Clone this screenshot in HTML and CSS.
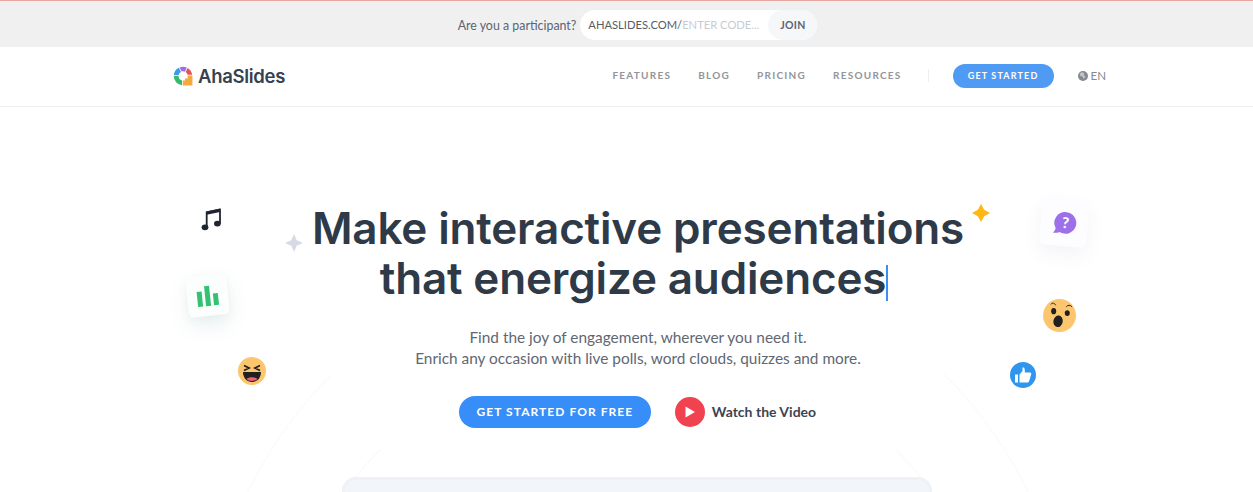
FILE: index.html
```html
<!DOCTYPE html>
<html lang="en">
<head>
    <meta charset="UTF-8">
    <meta name="viewport" content="width=device-width, initial-scale=1.0">
    <title>AhaSlides</title>
    <link rel="stylesheet" href="styles.css">
</head>
<body>
    <div class="join-bar">
        <span class="join-label">Are you a participant?</span>
        <form class="join-form">
            <span class="join-domain">AHASLIDES.COM/</span>
            <span class="join-code">ENTER CODE...</span>
            <span class="join-btn">JOIN</span>
        </form>
    </div>

    <header class="nav">
        <a class="logo">
            <svg class="logo-mark" viewBox="0 0 20 20" width="20" height="20">
                <path d="M.8 9.200A9.200 9.200 0 0 1 5.800 1.800L8 5.900A4.600 4.600 0 0 0 5.600 9.200Z" fill="#3f9be8"/>
                <path d="M6.500 1.500A9.200 9.200 0 0 1 13.800 1.600L12 5.800A4.600 4.600 0 0 0 8.700 5.600Z" fill="#9b70e6"/>
                <path d="M14.500 2A9.200 9.200 0 0 1 19.200 8.800H14.600A4.600 4.600 0 0 0 12.700 6.100Z" fill="#e8545a"/>
                <path d="M.8 10H5.600A4.600 4.600 0 0 0 9 14.500V19.200A9.200 9.200 0 0 1 .8 10Z" fill="#38b868"/>
                <path d="M14.600 9.600H19.400V19.400H9.800V14.500H12V12.500H14.600Z" fill="#f5a93a"/>
            </svg>
            <span class="logo-text">AhaSlides</span>
        </a>
        <nav class="nav-links">
            <a>FEATURES</a>
            <a>BLOG</a>
            <a>PRICING</a>
            <a>RESOURCES</a>
        </nav>
        <span class="nav-divider"></span>
        <a class="nav-cta">GET STARTED</a>
        <a class="lang">
            <svg viewBox="0 0 12 12" width="10" height="10">
                <circle cx="6" cy="6" r="6" fill="#86898d"/>
                <path d="M4 1.500 7.500 2.500 7 5 9 6.500 7 9.500 5.500 7 3 6 2 3.500Z" fill="#c3c5c8"/>
            </svg>
            EN
        </a>
    </header>

    <main class="hero">
        <div class="arc arc-outer"></div>
        <div class="arc arc-inner"></div>

        <!-- decoracao em volta do titulo -->
        <svg class="deco music" viewBox="0 0 24 24" width="24" height="24">
            <path d="M5.700 20V5.200L19 2.500V16.500" fill="none" stroke="#1f2433" stroke-width="1.800"/>
            <path d="M5.700 4.500 19 1.500V5L5.700 7.800Z" fill="#1f2433"/>
            <ellipse cx="4" cy="20.300" rx="3.400" ry="2.900" fill="#1f2433"/>
            <ellipse cx="16.400" cy="16.600" rx="3.400" ry="2.900" fill="#1f2433"/>
        </svg>
        <svg class="deco spark-grey" viewBox="0 0 20 20" width="18" height="20">
            <path d="M10 0 13 7 20 10 13 13 10 20 7 13 0 10 7 7Z" fill="#d5dae5"/>
        </svg>
        <svg class="deco spark-gold" viewBox="0 0 20 20" width="18" height="20">
            <path d="M10 0 13.500 6.500 20 10 13.500 13.500 10 20 6.500 13.500 0 10 6.500 6.500Z" fill="#fdb813"/>
        </svg>

        <div class="tile tile-chart">
            <svg viewBox="0 0 24 24" width="24" height="24">
                <rect x="1" y="7" width="5" height="15" fill="#33c172"/>
                <rect x="9" y="2" width="5" height="20" fill="#33c172"/>
                <rect x="17" y="10" width="5" height="12" fill="#33c172"/>
            </svg>
        </div>
        <div class="tile tile-question">
            <svg viewBox="0 0 24 24" width="24" height="24">
                <path d="M12.500 1A10.800 10.800 0 1 1 7.600 21.400C5.500 22.600 3 23 .8 22.600 2.400 21.400 3 19.800 3.200 17.800A10.800 10.800 0 0 1 12.500 1Z" fill="#9d70ea"/>
                <text x="12.500" y="17" text-anchor="middle" class="q-mark">?</text>
            </svg>
        </div>

        <svg class="deco laugh" viewBox="0 0 28 28" width="28" height="28">
            <circle cx="14" cy="14" r="14" fill="#fcc66f"/>
            <path d="M6 8.500 11 11 6 13.500M22 8.500 17 11 22 13.500" fill="none" stroke="#20201e" stroke-width="1.800"/>
            <path d="M5 15H23C23 21 19 25 14 25S5 21 5 15Z" fill="#20201e"/>
            <path d="M8.500 22C11 19.500 17 19.500 19.500 22 17.500 24.500 10.500 24.500 8.500 22Z" fill="#ee5f78"/>
        </svg>
        <svg class="deco wow" viewBox="0 0 34 34" width="33" height="33">
            <circle cx="17" cy="17" r="17" fill="#fcc66f"/>
            <ellipse cx="11" cy="12.500" rx="2.600" ry="3.200" fill="#20201e"/>
            <ellipse cx="25" cy="14.500" rx="2.600" ry="3" fill="#20201e"/>
            <ellipse cx="15.500" cy="23" rx="4.800" ry="6" transform="rotate(10 15.500 23)" fill="#20201e"/>
            <path d="M8 5.500C10 3.500 12 4 13 6.500M24 8C25.500 6 28 6 30 8" fill="none" stroke="#20201e" stroke-width="1"/>
        </svg>
        <svg class="deco like" viewBox="0 0 26 26" width="26" height="26">
            <circle cx="13" cy="13" r="13" fill="#2f96ee"/>
            <path d="M5 12.500H8V20.500H5Z" fill="#fff"/>
            <path d="M9.500 12.500 12.500 9V5.500C14.500 5 15 7 14.800 10.500H20C21.500 10.500 21.500 12 21 13L19 19.500C18.500 20.500 17.500 20.500 16.500 20.500H9.500Z" fill="#fff"/>
        </svg>

        <h1 class="hero-title">Make interactive presentations<br>that energize audiences<span class="caret"></span></h1>
        <p class="hero-sub">Find the joy of engagement, wherever you need it.<br>Enrich any occasion with live polls, word clouds, quizzes and more.</p>
        <div class="hero-actions">
            <a class="btn-primary">GET STARTED FOR FREE</a>
            <a class="btn-video">
                <span class="play">
                    <svg viewBox="0 0 12 12" width="12" height="12"><path d="M1.500 .5 11 6 1.500 11.500Z" fill="#fff"/></svg>
                </span>
                <span class="video-label">Watch the Video</span>
            </a>
        </div>
        <div class="preview"></div>
    </main>
</body>
</html>
```

FILE: styles.css
```css
* {
    box-sizing: border-box;
}

html, body {
    height: 492px;
    overflow: hidden;
}

body {
    margin: 0;
    font-family: "Lato", "Open Sans", sans-serif;
    background-color: #fff;
    color: #2f3a48;
}

.join-bar {
    height: 47px;
    border-top: 1px solid #e8a79c;
    background-color: #f0f0f0;
    display: flex;
    align-items: center;
    justify-content: center;
    gap: 4px;
    padding-left: 22px;
    padding-top: 2px;
}

.join-label {
    font-size: 12.400px;
    color: #5b6470;
}

.join-form {
    width: 237px;
    height: 30px;
    border-radius: 15px;
    background-color: #fff;
    display: flex;
    align-items: center;
    padding: 0 0 2px 8px;
    font-size: 11.200px;
    white-space: nowrap;
}

.join-domain {
    color: #555d68;
}

.join-code {
    color: #c8ccd2;
    flex: 1;
}

.join-btn {
    width: 49px;
    height: 30px;
    margin-bottom: -2px;
    padding-bottom: 1px;
    border-radius: 15px;
    background-color: #f6f7f9;
    display: flex;
    align-items: center;
    justify-content: center;
    font-size: 10.500px;
    font-weight: 700;
    letter-spacing: .3px;
    color: #5b6470;
}

.nav {
    height: 60px;
    border-bottom: 1px solid #eeeeee;
    display: flex;
    align-items: center;
    padding: 0 147px 2px 173px;
}

.logo {
    display: flex;
    align-items: center;
    gap: 5px;
}

.logo-text {
    font-family: "Inter", sans-serif;
    font-size: 18.500px;
    font-weight: 600;
    color: #37414f;
    letter-spacing: -.3px;
}

.nav-links {
    margin: 0 0 1px auto;
    display: flex;
    gap: 27px;
    font-size: 10px;
    font-weight: 700;
    letter-spacing: 1.250px;
    color: #929599;
}

.nav-divider {
    width: 1px;
    height: 13px;
    margin: 0 24px 0 26px;
    background-color: #eeeeee;
}

.nav-cta {
    width: 101px;
    height: 24px;
    border-radius: 12px;
    background-color: #4f9bf3;
    color: #fff;
    font-size: 9px;
    font-weight: 700;
    letter-spacing: 1.150px;
    display: flex;
    align-items: center;
    justify-content: center;
}

.lang {
    margin-left: 24px;
    display: flex;
    align-items: center;
    gap: 3px;
    font-size: 11.500px;
    color: #86898d;
}

.hero {
    position: relative;
    height: 385px;
    overflow: hidden;
    padding: 96px 0 0 23px;
    text-align: center;
}

.hero-title {
    position: relative;
    margin: 0;
    font-family: "Inter", sans-serif;
    font-size: 44px;
    font-weight: 600;
    line-height: 50px;
    letter-spacing: -.15px;
    color: #2f3a48;
}

.caret {
    display: inline-block;
    width: 2px;
    height: 36px;
    margin: 0 8px 0 0;
    vertical-align: -7px;
    background-color: #3a8ef6;
}

.hero-sub {
    position: relative;
    margin: 24px 0 0;
    font-size: 15.400px;
    line-height: 21px;
    color: #5f6773;
}

.hero-actions {
    position: relative;
    display: flex;
    justify-content: center;
    align-items: center;
    gap: 24px;
    margin-top: 27px;
    padding-right: 1px;
}

.btn-primary {
    width: 192px;
    height: 32px;
    padding-bottom: 2px;
    border-radius: 16px;
    background-color: #378ef8;
    color: #fff;
    font-size: 12px;
    font-weight: 700;
    letter-spacing: 1.050px;
    display: flex;
    align-items: center;
    justify-content: center;
}

.btn-video {
    display: flex;
    align-items: center;
    gap: 7px;
    font-size: 14px;
    font-weight: 700;
    color: #3c4450;
}

.video-label {
    margin-bottom: 2px;
}

.play {
    width: 30px;
    height: 30px;
    border-radius: 50%;
    background-color: #f0424f;
    display: flex;
    align-items: center;
    justify-content: center;
    padding-left: 1px;
}

.preview {
    position: absolute;
    left: 342px;
    top: 370px;
    width: 590px;
    height: 80px;
    border: 3px solid #eef1f6;
    border-radius: 14px;
    background-color: #f2f5fa;
}

/* enfeites soltos em volta do titulo */
.deco, .tile, .arc {
    position: absolute;
}

.music { left: 201px; top: 100px; }
.spark-grey { left: 285px; top: 126px; }
.spark-gold { left: 972px; top: 96px; }
.laugh { left: 238px; top: 250px; }
.wow { left: 1043px; top: 192px; }
.like { left: 1010px; top: 255px; }

.tile {
    display: flex;
    align-items: center;
    justify-content: center;
    background-color: #fff;
    border-radius: 5px;
}

.tile-chart {
    left: 187px;
    top: 168px;
    width: 41px;
    height: 41px;
    transform: rotate(-6deg);
    background-color: #fbfefc;
    box-shadow: 0 10px 20px rgba(110, 130, 150, .12), 0 2px 8px rgba(80, 200, 140, .08);
}

.tile-question {
    left: 1041px;
    top: 92px;
    width: 47px;
    height: 47px;
    transform: rotate(6deg);
    background-color: #fdfcff;
    box-shadow: 0 8px 18px rgba(120, 120, 160, .08);
}

.q-mark {
    font-family: "Lato", sans-serif;
    font-size: 15px;
    font-weight: 900;
    fill: #fff;
}

/* so as laterais do circulo aparecem */
.arc {
    border: 1px solid #f8f9fa;
    border-top-color: transparent;
    border-radius: 50%;
}

.arc-outer {
    left: 204px;
    top: 140px;
    width: 868px;
    height: 868px;
}

.arc-inner {
    left: 274px;
    top: 235px;
    width: 728px;
    height: 728px;
}
```
